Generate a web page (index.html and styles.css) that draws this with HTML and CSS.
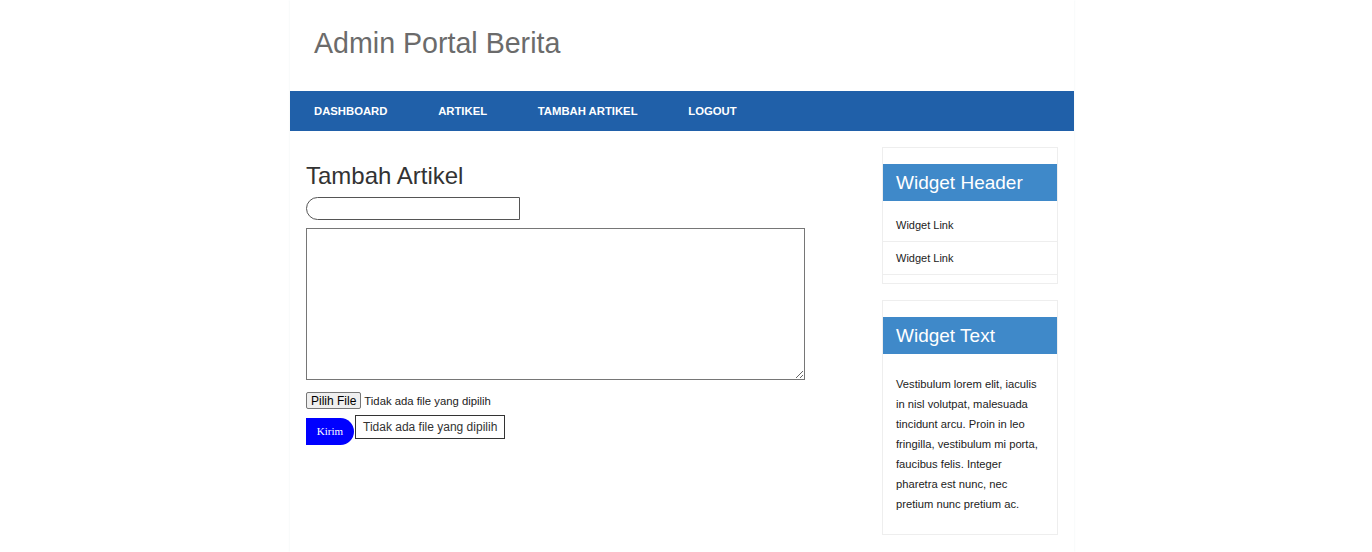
FILE: index.html
```html
<!DOCTYPE html>
<html lang="id">
<head>
<meta charset="utf-8">
<title>Admin Portal Berita</title>
<link rel="stylesheet" href="styles.css">
</head>
<body>
<div class="wrap">
  <header class="site-header">
    <h1 class="site-title">Admin Portal Berita</h1>
  </header>
  <nav class="nav">
    <a href="#">Dashboard</a>
    <a href="#">Artikel</a>
    <a href="#">Tambah Artikel</a>
    <a href="#">Logout</a>
  </nav>
  <div class="main">
    <section class="content">
      <h2 class="page-title">Tambah Artikel</h2>
      <form class="form">
        <input class="title-input" type="text">
        <textarea class="body-input"></textarea>
        <div class="file-row">
          <button type="button" class="file-btn">Pilih File</button>
          <span class="file-name">Tidak ada file yang dipilih</span>
        </div>
        <div class="submit-row">
          <button type="button" class="submit-btn">Kirim</button>
          <span class="file-box">Tidak ada file yang dipilih</span>
        </div>
      </form>
    </section>
    <aside class="sidebar">
      <div class="widget">
        <h3 class="widget-head">Widget Header</h3>
        <ul class="widget-links">
          <li><a href="#">Widget Link</a></li>
          <li><a href="#">Widget Link</a></li>
        </ul>
      </div>
      <div class="widget">
        <h3 class="widget-head">Widget Text</h3>
        <p class="widget-text">Vestibulum lorem elit, iaculis in nisl volutpat, malesuada tincidunt arcu. Proin in leo fringilla, vestibulum mi porta, faucibus felis. Integer pharetra est nunc, nec pretium nunc pretium ac.</p>
      </div>
    </aside>
  </div>
</div>
</body>
</html>
```
FILE: styles.css
```css
* { box-sizing: border-box; }
html, body { margin: 0; padding: 0; background: #ffffff; }
body {
  font-family: "Liberation Sans", Arial, sans-serif;
  color: #333333;
  padding-right: 8px;
}
.wrap {
  width: 784px;
  margin: 0 auto;
  min-height: 552px;
  background: #ffffff;
  box-shadow: 0 0 2px rgba(200, 220, 220, 0.35);
}
.site-header {
  height: 91px;
  padding: 26px 24px 0;
}
.site-title {
  margin: 0;
  font-size: 28.6px;
  line-height: 34px;
  font-weight: normal;
  color: #6b6b6b;
}
.nav {
  height: 40px;
  background: #2060a9;
  display: flex;
  align-items: center;
}
.nav a {
  color: #ffffff;
  text-decoration: none;
  text-transform: uppercase;
  font-weight: bold;
  font-size: 11.3px;
  padding: 0 26.7px 0 24px;
  line-height: 40px;
}
.main {
  display: flex;
  justify-content: space-between;
  padding: 16px 16px 0;
}
.content {
  width: 520px;
  padding-top: 14px;
}
.page-title {
  margin: 0 0 6px;
  font-size: 24px;
  line-height: 30px;
  font-weight: normal;
  color: #333333;
}
.form { display: flex; flex-direction: column; align-items: flex-start; }
.title-input {
  width: 214px;
  height: 23px;
  border: 1px solid #555555;
  border-radius: 12px 0 0 12px;
  padding: 0 6px;
  margin: 0;
  background: #ffffff;
}
.body-input {
  width: 499px;
  height: 152px;
  margin: 8px 0 0;
  border: 1px solid #767676;
  border-radius: 0;
  resize: vertical;
}
.file-row {
  margin-top: 12px;
  display: flex;
  align-items: center;
  gap: 3px;
}
.file-btn {
  height: 17px;
  padding: 0 4px;
  font-family: "Liberation Sans", Arial, sans-serif;
  font-size: 12px;
  line-height: 14px;
  color: #000000;
  background: #efefef;
  border: 1px solid #767676;
  border-radius: 2px;
}
.file-name {
  font-size: 11.3px;
  color: #222222;
}
.submit-row {
  margin-top: 6px;
  display: flex;
  align-items: flex-start;
}
.submit-btn {
  margin-top: 3px;
  width: 48px;
  height: 27px;
  padding: 0;
  border: none;
  border-radius: 0 14px 14px 0;
  background: #0000ff;
  color: #ffffff;
  font-family: "Liberation Serif", "Times New Roman", serif;
  font-size: 11px;
  line-height: 27px;
}
.file-box {
  margin-left: 1px;
  height: 24px;
  line-height: 22px;
  padding: 0 7px;
  border: 1px solid #333333;
  font-size: 12px;
  color: #333333;
}
.sidebar {
  width: 176px;
  display: flex;
  flex-direction: column;
  gap: 16px;
}
.widget {
  border: 1px solid #eeeeee;
  padding-top: 16px;
}
.widget-head {
  margin: 0;
  height: 37px;
  line-height: 37px;
  padding: 0 13px;
  background: #3f89c9;
  color: #ffffff;
  font-size: 19px;
  font-weight: normal;
}
.widget-links {
  list-style: none;
  margin: 0;
  padding: 8px 0 8px;
}
.widget-links li {
  border-bottom: 1px solid #eeeeee;
}
.widget-links a {
  display: block;
  padding: 0 13px;
  line-height: 32px;
  font-size: 11px;
  color: #222222;
  text-decoration: none;
}
.widget-text {
  margin: 0;
  padding: 20px 16px 20px 13px;
  font-size: 11.2px;
  line-height: 20px;
  color: #222222;
}
```
